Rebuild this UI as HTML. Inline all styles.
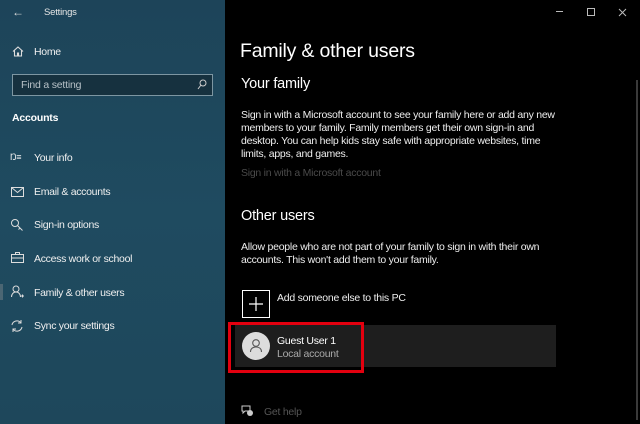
<!DOCTYPE html>
<html><head><meta charset="utf-8"><style>
*{margin:0;padding:0;box-sizing:border-box}
body{width:640px;height:424px;overflow:hidden;background:#000;font-family:"Liberation Sans",sans-serif;position:relative;color:#fff}
.side{position:absolute;left:0;top:0;width:225px;height:424px;background:linear-gradient(180deg,#1d4459 0%,#1f4b60 50%,#1e475b 100%)}
.t{position:absolute;white-space:nowrap}
.s{font-size:10.5px;letter-spacing:-0.2px}
.nav{font-size:10.5px;letter-spacing:-0.3px;color:#f0f0f0}
.p{font-size:10.5px;letter-spacing:-0.25px;color:#eee;line-height:13px}
</style></head><body>
<div class="side">
<div class="t" style="left:12px;top:5px;font-size:12px;color:#ddd">&#8592;</div>
<div class="t s" style="left:44px;top:7px;font-size:9.5px;color:#e6e6e6">Settings</div>
<svg class="t" style="left:12px;top:46px" width="12" height="11" viewBox="0 0 12 11"><path d="M1 5.5L6 1l5 4.5M2.5 4.5V10h3V7h1v3h3V4.5" fill="none" stroke="#ddd" stroke-width="1.1"/></svg>
<div class="t nav" style="left:34px;top:46px">Home</div>
<div class="t" style="left:12px;top:74px;width:201px;height:22px;border:1.5px solid #7d96a2;background:#16313f"></div>
<div class="t s" style="left:21px;top:79px;color:#b8c2c8">Find a setting</div>
<svg class="t" style="left:197px;top:79px" width="10" height="11"><circle cx="6" cy="4" r="3" fill="none" stroke="#ccc"/><path d="M4 6L1 10" stroke="#ccc"/></svg>
<div class="t" style="left:12px;top:112px;font-size:10.5px;font-weight:bold;letter-spacing:-0.2px">Accounts</div>
<div class="t nav" style="left:10px;top:152px;font-size:9px">&#330;&#8801;</div>
<div class="t nav" style="left:34px;top:152px">Your info</div>
<svg class="t" style="left:11px;top:187px" width="13" height="10"><rect x="0.5" y="0.5" width="12" height="9" fill="none" stroke="#ddd"/><path d="M0.5 0.5l6 5 6-5" fill="none" stroke="#ddd"/></svg>
<div class="t nav" style="left:34px;top:186px">Email &amp; accounts</div>
<svg class="t" style="left:10px;top:218px" width="14" height="14"><circle cx="5" cy="5" r="3.5" fill="none" stroke="#ddd"/><path d="M7.5 7.5l5 5M10 10l-1.5 1.5" stroke="#ddd" fill="none"/></svg>
<div class="t nav" style="left:34px;top:219px">Sign-in options</div>
<svg class="t" style="left:11px;top:252px" width="13" height="11"><rect x="0.5" y="2.5" width="12" height="8" fill="none" stroke="#ddd"/><path d="M4.5 2.5V0.5h4v2M0.5 6h12" stroke="#ddd" fill="none"/></svg>
<div class="t nav" style="left:34px;top:253px">Access work or school</div>
<div class="t" style="left:0;top:284px;width:3px;height:16px;background:#4b6673"></div>
<svg class="t" style="left:11px;top:285px" width="14" height="14"><circle cx="5" cy="4" r="3" fill="none" stroke="#ddd"/><path d="M0.5 12c0-3 2-5 4.5-5s4.5 2 4.5 5M10 11h3M11.5 9.5v3" stroke="#ddd" fill="none"/></svg>
<div class="t nav" style="left:34px;top:287px">Family &amp; other users</div>
<svg class="t" style="left:10px;top:319px" width="14" height="14"><path d="M2 6a5 5 0 0 1 9-2M12 8a5 5 0 0 1-9 2" stroke="#ddd" fill="none"/><path d="M11 1v3H8M3 13v-3h3" stroke="#ddd" fill="none"/></svg>
<div class="t nav" style="left:34px;top:320px">Sync your settings</div>
</div>
<div class="t" style="left:556px;top:11px;width:7px;height:1px;background:#bbb"></div>
<div class="t" style="left:587px;top:8px;width:8px;height:8px;border:1px solid #bbb"></div>
<svg class="t" style="left:618px;top:8px" width="9" height="9"><path d="M1 1l7 7M8 1L1 8" stroke="#bbb"/></svg>
<div class="t" style="left:636px;top:80px;width:1.5px;height:340px;background:#3a3a3a"></div>
<div class="t" style="left:240px;top:40px;font-size:19.5px;letter-spacing:-0.2px;color:#fff">Family &amp; other users</div>
<div class="t" style="left:241px;top:76px;font-size:14.5px;letter-spacing:-0.2px">Your family</div>
<div class="t p" style="left:241px;top:109px">Sign in with a Microsoft account to see your family here or add any new<br>members to your family. Family members get their own sign-in and<br>desktop. You can help kids stay safe with appropriate websites, time<br>limits, apps, and games.</div>
<div class="t p" style="left:241px;top:167px;color:#4a4a4a">Sign in with a Microsoft account</div>
<div class="t" style="left:241px;top:208px;font-size:14.5px;letter-spacing:-0.2px">Other users</div>
<div class="t p" style="left:241px;top:241px">Allow people who are not part of your family to sign in with their own<br>accounts. This won't add them to your family.</div>
<div class="t" style="left:242px;top:290px;width:28px;height:28px;border:1.5px solid #fff"></div>
<svg class="t" style="left:249px;top:297px" width="14" height="14"><path d="M7 0v14M0 7h14" stroke="#fff" stroke-width="1.2"/></svg>
<div class="t p" style="left:277px;top:292px">Add someone else to this PC</div>
<div class="t" style="left:235px;top:325px;width:321px;height:42px;background:#1e1e1e"></div>
<div class="t" style="left:228px;top:322px;width:136px;height:51px;border:3px solid #e3000f"></div>
<div class="t" style="left:242px;top:332px;width:28px;height:28px;border-radius:50%;background:#dcdcdc"></div>
<svg class="t" style="left:249px;top:338px" width="14" height="15"><circle cx="7" cy="5" r="3.3" fill="none" stroke="#555" stroke-width="1.1"/><path d="M1.5 14c0-3.5 2.5-5 5.5-5s5.5 1.5 5.5 5" fill="none" stroke="#555" stroke-width="1.1"/></svg>
<div class="t p" style="left:277px;top:335px;color:#fff">Guest User 1</div>
<div class="t p" style="left:277px;top:348px;color:#aaa">Local account</div>
<svg class="t" style="left:241px;top:405px" width="13" height="12"><path d="M1 1h8v5H4L2 8V6H1z" fill="none" stroke="#ccc"/><circle cx="9" cy="8" r="3" fill="#ccc"/></svg>
<div class="t p" style="left:264px;top:406px;color:#555">Get help</div>
</body></html>
